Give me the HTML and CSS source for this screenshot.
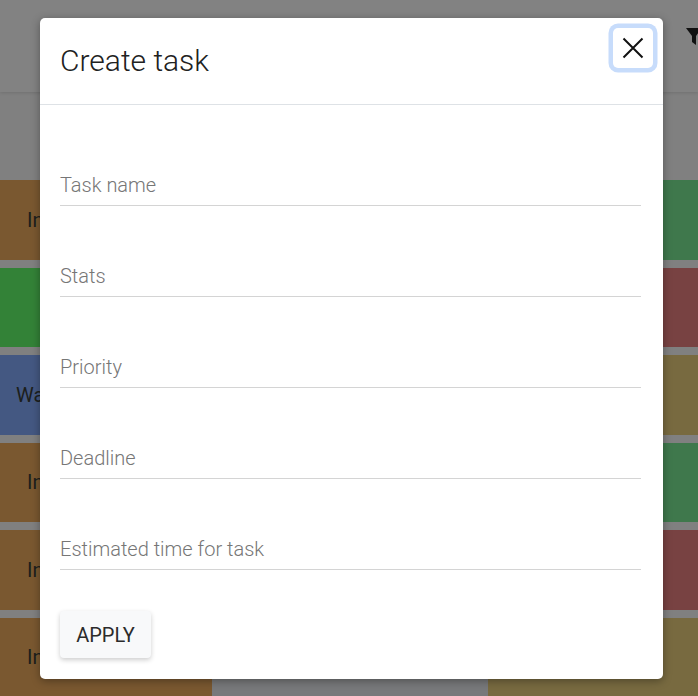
FILE: index.html
```html
<!DOCTYPE html>
<html lang="en">
<head>
<meta charset="utf-8">
<title>Create task</title>
<link rel="stylesheet" href="styles.css">
</head>
<body>
<div class="page">
  <header class="topbar">
    <svg class="filter-icon" viewBox="0 0 16 18" width="16" height="18" aria-hidden="true">
      <path d="M0 0 H16 L10 8 V17 L6 14 V8 Z" fill="#111"/>
    </svg>
  </header>
  <main class="board">
    <div class="column">
      <div class="card c-brown">In progress</div>
      <div class="card c-green"></div>
      <div class="card c-blue card-wide">Waiting for review</div>
      <div class="card c-brown">In progress</div>
      <div class="card c-brown">In progress</div>
      <div class="card c-brown">In progress</div>
    </div>
    <div class="column">
      <div class="card c-gray"></div>
      <div class="card c-gray"></div>
      <div class="card c-gray"></div>
      <div class="card c-gray"></div>
      <div class="card c-gray"></div>
      <div class="card c-gray"></div>
    </div>
    <div class="column">
      <div class="card c-rgreen"></div>
      <div class="card c-red"></div>
      <div class="card c-olive"></div>
      <div class="card c-rgreen"></div>
      <div class="card c-red"></div>
      <div class="card c-olive"></div>
    </div>
  </main>
</div>

<div class="modal" role="dialog" aria-labelledby="modal-title">
  <div class="modal-header">
    <h2 id="modal-title" class="modal-title">Create task</h2>
    <button class="close-btn" type="button" aria-label="Close">
      <svg viewBox="0 0 22 22" width="22" height="22" aria-hidden="true">
        <path d="M1.5 1.5 L20.5 20.5 M20.5 1.5 L1.5 20.5" stroke="#111" stroke-width="2" fill="none"/>
      </svg>
    </button>
  </div>
  <div class="modal-body">
    <div class="field"><span class="field-label">Task name</span></div>
    <div class="field"><span class="field-label">Stats</span></div>
    <div class="field"><span class="field-label">Priority</span></div>
    <div class="field"><span class="field-label">Deadline</span></div>
    <div class="field"><span class="field-label">Estimated time for task</span></div>
    <div class="actions">
      <button class="apply-btn" type="button">APPLY</button>
    </div>
  </div>
</div>
</body>
</html>
```

FILE: styles.css
```css
* { box-sizing: border-box; }

html, body {
  margin: 0;
  padding: 0;
}

body {
  width: 698px;
  height: 696px;
  overflow: hidden;
  position: relative;
  background: #808080;
  font-family: Roboto, "Liberation Sans", sans-serif;
}

.page {
  display: flex;
  flex-direction: column;
  height: 100%;
}

.topbar {
  height: 92px;
  flex: none;
  background: #828282;
  box-shadow: 0 1px 3px rgba(0, 0, 0, 0.12);
  display: flex;
  justify-content: flex-end;
  align-items: flex-start;
  padding-top: 28px;
}

.filter-icon {
  margin-right: -4px;
}

.board {
  display: grid;
  grid-template-columns: 212px 276px 210px;
  padding-top: 88px;
}

.column {
  display: flex;
  flex-direction: column;
  gap: 8px;
}

.card {
  height: 79.5px;
  flex: none;
  display: flex;
  align-items: center;
  padding-left: 27px;
  font-size: 20px;
  color: #1c1f1c;
  white-space: nowrap;
  overflow: hidden;
}

.card-wide { padding-left: 16px; }

.c-brown { background: #7a5830; }
.c-green { background: #338237; }
.c-blue { background: #445882; }
.c-gray { background: #78797b; }
.c-rgreen { background: #3f784c; }
.c-red { background: #784242; }
.c-olive { background: #786a40; }

/* Modal */
.modal {
  position: absolute;
  left: 40px;
  top: 18px;
  width: 623px;
  background: #fff;
  border-radius: 5px;
  box-shadow: 0 2px 8px rgba(0, 0, 0, 0.35);
}

.modal-header {
  height: 87px;
  border-bottom: 1px solid #dee2e6;
  display: flex;
  align-items: center;
  justify-content: space-between;
  padding: 0 10px 0 20px;
}

.modal-title {
  margin: 0;
  font-size: 30px;
  font-weight: 300;
  color: #212121;
  line-height: 1.2;
  margin-top: 0;
}

.close-btn {
  align-self: flex-start;
  margin-top: 10px;
  width: 40px;
  height: 40px;
  padding: 0;
  border: 0;
  background: #fff;
  border-radius: 5px;
  box-shadow: 0 0 0 4.5px #c7dcfb;
  display: flex;
  align-items: center;
  justify-content: center;
}

.modal-body {
  padding: 33px 22px 21px 20px;
  display: flex;
  flex-direction: column;
  gap: 23px;
}

.field {
  height: 68px;
  border-bottom: 1px solid #d4d4d4;
  display: flex;
  align-items: flex-end;
  padding-bottom: 8px;
}

.field-label {
  font-size: 20px;
  font-weight: 300;
  color: #767676;
  line-height: 24px;
}

.actions {
  margin-top: 18px;
  display: flex;
}

.apply-btn {
  width: 91px;
  height: 47px;
  border: 0;
  border-radius: 4px;
  background: #f8f9fa;
  box-shadow: 0 2px 5px rgba(0, 0, 0, 0.2);
  font-family: Roboto, "Liberation Sans", sans-serif;
  font-size: 20px;
  font-weight: 400;
  color: #2b2b2b;
  padding: 0;
}
```
